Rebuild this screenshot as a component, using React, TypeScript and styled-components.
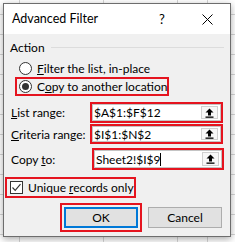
import React from "react";
import styled, { createGlobalStyle } from "styled-components";

const GlobalStyle = createGlobalStyle`
  html, body {
    margin: 0;
    padding: 0;
  }
  body {
    width: 235px;
    height: 242px;
    overflow: hidden;
    font-family: Lato, "Liberation Sans", sans-serif;
    font-size: 12px;
    color: #000;
    white-space: nowrap;
    background-color: #fff;
    background-image:
      linear-gradient(
        to right,
        transparent 19px, #d6d6d6 19px, #d6d6d6 20px, transparent 20px,
        transparent 103px, #d6d6d6 103px, #d6d6d6 104px, transparent 104px,
        transparent 177px, #d6d6d6 177px, #d6d6d6 178px, transparent 178px,
        transparent 207px, #d6d6d6 207px, #d6d6d6 208px, transparent 208px
      ),
      repeating-linear-gradient(
        to bottom,
        transparent 0, transparent 14px, #d6d6d6 14px, #d6d6d6 15px, transparent 15px, transparent 20px
      );
  }
`;

const Page = styled.div`
  padding: 3px 0 0 3px;
`;

const Dialog = styled.div`
  width: 226px;
  height: 232px;
  border: 1px solid #6d6d6d;
  background: #f0f0f0;
  box-shadow: 0 2px 7px rgba(0, 0, 0, 0.35);
  display: flex;
  flex-direction: column;
`;

const TitleBar = styled.div`
  height: 30px;
  background: #fff;
  display: flex;
  align-items: center;
  padding-left: 8px;
  font-size: 12.5px;
`;

const Title = styled.span`
  flex: 1;
  padding-bottom: 1px;
`;

const Help = styled.span`
  width: 43px;
  font-size: 13px;
  padding-bottom: 1px;
`;

const Close = styled.span`
  width: 28px;
  display: flex;
`;

const Body = styled.div`
  display: flex;
  flex-direction: column;
  padding-top: 6px;
`;

const GroupHeader = styled.div`
  height: 14px;
  display: flex;
  align-items: center;
  padding-left: 6px;
  padding-right: 6px;
`;

const GroupRule = styled.div`
  flex: 1;
  height: 1px;
  background: #dcdcdc;
  margin-left: 6px;
`;

const Highlight = styled.div<{ $left: number; $w: number; $h: number; $top?: number }>`
  box-sizing: border-box;
  border: 2px solid #e5141f;
  margin-left: ${(p) => p.$left}px;
  margin-top: ${(p) => p.$top ?? 0}px;
  width: ${(p) => p.$w}px;
  height: ${(p) => p.$h}px;
  display: flex;
  align-items: center;
`;

const OptionRow = styled.div<{ $pad: number }>`
  display: flex;
  align-items: center;
  height: 18px;
  margin-top: 5px;
  padding-left: ${(p) => p.$pad}px;
`;

const OptionLabel = styled.label<{ $pad?: number }>`
  display: flex;
  align-items: center;
  gap: 5px;
  padding-left: ${(p) => p.$pad ?? 0}px;
`;

const Radio = styled.span<{ $checked?: boolean }>`
  box-sizing: border-box;
  width: 13px;
  height: 13px;
  border-radius: 50%;
  border: 1px solid #333;
  background: #fff;
  display: flex;
  align-items: center;
  justify-content: center;

  &::after {
    content: "";
    display: ${(p) => (p.$checked ? "block" : "none")};
    width: 7px;
    height: 7px;
    border-radius: 50%;
    background: #333;
  }
`;

const FieldRow = styled.div<{ $top: number; $h: number }>`
  display: flex;
  align-items: center;
  margin-top: ${(p) => p.$top}px;
  height: ${(p) => p.$h}px;
  padding-left: 7px;
`;

const FieldLabel = styled.span<{ $w: number }>`
  width: ${(p) => p.$w}px;
`;

const Input = styled.div`
  box-sizing: border-box;
  flex: 1;
  height: 100%;
  background: #fff;
  border: 1px solid #c4c4c4;
  display: flex;
  align-items: center;
  padding-left: 1px;
`;

const InputText = styled.span`
  flex: 1;
  display: flex;
  align-items: center;
`;

const Caret = styled.span`
  width: 1px;
  height: 13px;
  background: #000;
`;

const PickButton = styled.span`
  box-sizing: border-box;
  width: 17px;
  height: calc(100% - 2px);
  margin-right: 2px;
  border: 1px solid #d0d0d0;
  background: #f7f7f7;
  display: flex;
  align-items: center;
  justify-content: center;
`;

const CheckBox = styled.span`
  box-sizing: border-box;
  width: 13px;
  height: 13px;
  border: 1px solid #333;
  background: #fff;
  display: flex;
  align-items: center;
  justify-content: center;
`;

const ButtonRow = styled.div`
  display: flex;
  justify-content: flex-end;
  align-items: center;
  margin-top: 5px;
  padding-right: 8px;
  gap: 6px;
`;

const Button = styled.button<{ $primary?: boolean }>`
  box-sizing: border-box;
  width: 74px;
  height: 21px;
  font-family: inherit;
  font-size: 12px;
  color: #000;
  padding: 0;
  background: #e1e1e1;
  border: ${(p) => (p.$primary ? "2px solid #0078d7" : "1px solid #adadad")};
`;

const ButtonFrame = styled.div`
  box-sizing: border-box;
  border: 2px solid #e5141f;
  padding: 2px;
  display: flex;
`;

function Pick() {
  return (
    <PickButton>
      <svg width="9" height="10" viewBox="0 0 9 10">
        <path d="M4.5 0.5 L8.5 4.5 L6 4.5 L6 7.5 L3 7.5 L3 4.5 L0.5 4.5 Z" fill="#000" />
        <rect x="0.5" y="8.5" width="8" height="1.3" fill="#000" />
      </svg>
    </PickButton>
  );
}

export default function App() {
  return (
    <>
      <GlobalStyle />
      <Page>
        <Dialog>
          <TitleBar>
            <Title>Advanced Filter</Title>
            <Help>?</Help>
            <Close>
              <svg width="11" height="11" viewBox="0 0 11 11">
                <path d="M0.5 0.5 L10.5 10.5 M10.5 0.5 L0.5 10.5" stroke="#000" strokeWidth="1" />
              </svg>
            </Close>
          </TitleBar>

          <Body>
            <GroupHeader>
              <span>Action</span>
              <GroupRule />
            </GroupHeader>

            <OptionRow $pad={15}>
              <OptionLabel>
                <Radio />
                <span>
                  <u>F</u>ilter the list, in-place
                </span>
              </OptionLabel>
            </OptionRow>

            <Highlight $left={11} $w={154} $h={19}>
              <OptionLabel $pad={2}>
                <Radio $checked />
                <span>
                  C<u>o</u>py to another location
                </span>
              </OptionLabel>
            </Highlight>

            <FieldRow $top={6} $h={21}>
              <FieldLabel $w={79}>
                <u>L</u>ist range:
              </FieldLabel>
              <Highlight $left={0} $w={133} $h={21}>
                <Input>
                  <InputText>$A$1:$F$12</InputText>
                  <Pick />
                </Input>
              </Highlight>
            </FieldRow>

            <FieldRow $top={1} $h={20}>
              <FieldLabel $w={79}>
                <u>C</u>riteria range:
              </FieldLabel>
              <Highlight $left={0} $w={133} $h={20}>
                <Input>
                  <InputText>$I$1:$N$2</InputText>
                  <Pick />
                </Input>
              </Highlight>
            </FieldRow>

            <FieldRow $top={4} $h={22}>
              <FieldLabel $w={81}>
                Copy <u>t</u>o:
              </FieldLabel>
              <Highlight $left={0} $w={132} $h={22}>
                <Input>
                  <InputText>
                    Sheet2!$I$9
                    <Caret />
                  </InputText>
                  <Pick />
                </Input>
              </Highlight>
            </FieldRow>

            <Highlight $left={1} $w={131} $h={21} $top={7}>
              <OptionLabel $pad={3}>
                <CheckBox>
                  <svg width="11" height="11" viewBox="0 0 11 11">
                    <path d="M1.5 5.5 L4.2 8.3 L9.5 2.2" stroke="#333" strokeWidth="1.2" fill="none" />
                  </svg>
                </CheckBox>
                <span>
                  Unique <u>r</u>ecords only
                </span>
              </OptionLabel>
            </Highlight>

            <ButtonRow>
              <ButtonFrame>
                <Button $primary>OK</Button>
              </ButtonFrame>
              <Button>Cancel</Button>
            </ButtonRow>
          </Body>
        </Dialog>
      </Page>
    </>
  );
}
